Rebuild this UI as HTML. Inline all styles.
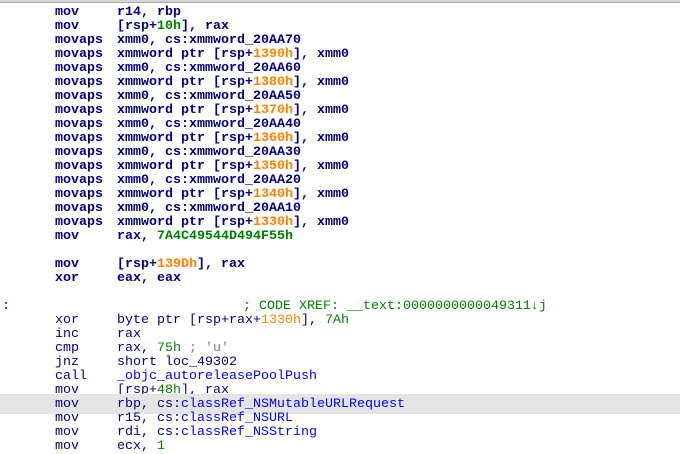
<!DOCTYPE html>
<html><head><meta charset="utf-8"><style>
body{margin:0;width:680px;height:452px;background:#fff;overflow:hidden;position:relative;font-family:"Liberation Mono",monospace;font-size:13.33px;font-weight:bold;}
.top{position:absolute;left:0;top:0;width:680px;height:2px;background:#d4d4d4;border-bottom:1px solid #a8a8a8;}
.r{position:absolute;left:0;height:14px;line-height:14px;white-space:pre;color:#000080;width:680px;padding-top:2px;}
.n{font-weight:normal}
.m{position:absolute;left:55px;}
.o{position:absolute;left:117px;}
.g{color:#008000}.y{color:#ff8000}.b{color:#0000ff}.c{color:#808080;font-weight:normal}
.hl{background:#e4e4e4}
</style></head><body>
<div class="top"></div>
<div class="r" style="top:4px"><span class="m">mov</span><span class="o">r14, rbp</span></div>
<div class="r" style="top:18px"><span class="m">mov</span><span class="o">[rsp+<span class="g">10h</span>], rax</span></div>
<div class="r" style="top:32px"><span class="m">movaps</span><span class="o">xmm0, cs:xmmword_20AA70</span></div>
<div class="r" style="top:46px"><span class="m">movaps</span><span class="o">xmmword ptr [rsp+<span class="y">1390h</span>], xmm0</span></div>
<div class="r" style="top:60px"><span class="m">movaps</span><span class="o">xmm0, cs:xmmword_20AA60</span></div>
<div class="r" style="top:74px"><span class="m">movaps</span><span class="o">xmmword ptr [rsp+<span class="y">1380h</span>], xmm0</span></div>
<div class="r" style="top:88px"><span class="m">movaps</span><span class="o">xmm0, cs:xmmword_20AA50</span></div>
<div class="r" style="top:102px"><span class="m">movaps</span><span class="o">xmmword ptr [rsp+<span class="y">1370h</span>], xmm0</span></div>
<div class="r" style="top:116px"><span class="m">movaps</span><span class="o">xmm0, cs:xmmword_20AA40</span></div>
<div class="r" style="top:130px"><span class="m">movaps</span><span class="o">xmmword ptr [rsp+<span class="y">1360h</span>], xmm0</span></div>
<div class="r" style="top:144px"><span class="m">movaps</span><span class="o">xmm0, cs:xmmword_20AA30</span></div>
<div class="r" style="top:158px"><span class="m">movaps</span><span class="o">xmmword ptr [rsp+<span class="y">1350h</span>], xmm0</span></div>
<div class="r" style="top:172px"><span class="m">movaps</span><span class="o">xmm0, cs:xmmword_20AA20</span></div>
<div class="r" style="top:186px"><span class="m">movaps</span><span class="o">xmmword ptr [rsp+<span class="y">1340h</span>], xmm0</span></div>
<div class="r" style="top:200px"><span class="m">movaps</span><span class="o">xmm0, cs:xmmword_20AA10</span></div>
<div class="r" style="top:214px"><span class="m">movaps</span><span class="o">xmmword ptr [rsp+<span class="y">1330h</span>], xmm0</span></div>
<div class="r" style="top:228px"><span class="m">mov</span><span class="o">rax, <span class="g">7A4C49544D494F55h</span></span></div>
<div class="r" style="top:256px"><span class="m">mov</span><span class="o">[rsp+<span class="y">139Dh</span>], rax</span></div>
<div class="r" style="top:270px"><span class="m">xor</span><span class="o">eax, eax</span></div>
<div class="r n" style="top:298px"><span style="position:absolute;left:2px">:</span><span class="g" style="position:absolute;left:243px">; CODE XREF: __text:0000000000049311↓j</span></div>
<div class="r n" style="top:312px"><span class="m">xor</span><span class="o">byte ptr [rsp+rax+<span class="y">1330h</span>], <span class="g">7Ah</span></span></div>
<div class="r n" style="top:326px"><span class="m">inc</span><span class="o">rax</span></div>
<div class="r n" style="top:340px"><span class="m">cmp</span><span class="o">rax, <span class="g">75h</span> <span class="c">; 'u'</span></span></div>
<div class="r n" style="top:354px"><span class="m">jnz</span><span class="o">short loc_49302</span></div>
<div class="r n" style="top:368px"><span class="m">call</span><span class="o b">_objc_autoreleasePoolPush</span></div>
<div class="r n" style="top:382px"><span class="m">mov</span><span class="o">[rsp+<span class="g">48h</span>], rax</span></div>
<div class="r n hl" style="top:394px;height:16px;padding-top:4px"><span class="m">mov</span><span class="o">rbp, cs:<span class="b">classRef_NSMutableURLRequest</span></span></div>
<div class="r n" style="top:410px"><span class="m">mov</span><span class="o">r15, cs:<span class="b">classRef_NSURL</span></span></div>
<div class="r n" style="top:424px"><span class="m">mov</span><span class="o">rdi, cs:<span class="b">classRef_NSString</span></span></div>
<div class="r n" style="top:438px"><span class="m">mov</span><span class="o">ecx, <span class="g">1</span></span></div>
</body></html>
